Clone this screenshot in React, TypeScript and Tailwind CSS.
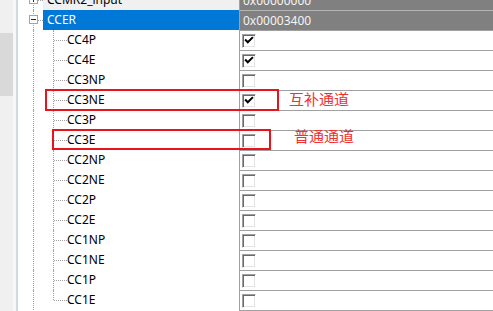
import React from "react";

type Row = {
  name: string;
  root?: boolean;
  value?: string;
  expand?: "+" | "-";
  selected?: boolean;
  hover?: boolean;
  checked?: boolean;
  last?: boolean;
};

const rows: Row[] = [
  { name: "CCMR2_input", root: true, value: "0x00000000", expand: "+", hover: true },
  { name: "CCER", root: true, value: "0x00003400", expand: "-", selected: true },
  { name: "CC4P", checked: true },
  { name: "CC4E", checked: true },
  { name: "CC3NP" },
  { name: "CC3NE", checked: true },
  { name: "CC3P" },
  { name: "CC3E" },
  { name: "CC2NP" },
  { name: "CC2NE" },
  { name: "CC2P" },
  { name: "CC2E" },
  { name: "CC1NP" },
  { name: "CC1NE" },
  { name: "CC1P" },
  { name: "CC1E", last: true },
];

function ExpandBox({ kind }: { kind: "+" | "-" }) {
  return (
    <span className="absolute left-[11px] top-[5px] w-[9px] h-[9px] border border-[#9aa4b2] bg-white flex items-center justify-center">
      <svg width="7" height="7" viewBox="0 0 7 7" shapeRendering="crispEdges">
        <rect x="1" y="3" width="5" height="1" fill="#2b2b2b" />
        {kind === "+" && <rect x="3" y="1" width="1" height="5" fill="#2b2b2b" />}
      </svg>
    </span>
  );
}

function CheckBox({ checked }: { checked?: boolean }) {
  return (
    <div className="ml-[2px] w-[14px] h-[14px] border border-t-[#a0a0a0] border-l-[#a0a0a0] border-r-white border-b-white shadow-[inset_1px_1px_0_#696969,inset_-1px_-1px_0_#e3e3e3] bg-white flex items-center justify-center">
      {checked && (
        <svg width="10" height="10" viewBox="0 0 10 10" className="mt-[1px]">
          <path d="M1.8 4.2 L3.8 6.3 L8.2 1.8" fill="none" stroke="#000" strokeWidth="2" strokeLinecap="square" />
        </svg>
      )}
    </div>
  );
}

function TreeRow({ r }: { r: Row }) {
  const header = r.root;
  return (
    <div className={`flex ${r.last ? "h-[21px]" : "h-[20px]"}`}>
      <div className="relative w-[221px] h-[20px] shrink-0 flex">
        {/* root-level vertical dotted line */}
        <span className="absolute left-[15px] top-0 h-[20px] border-l border-dotted border-[#a0a0a0]" />
        {header ? (
          <>
            <span className="absolute left-[20px] top-[10px] w-[5px] border-t border-dotted border-[#a0a0a0]" />
            <ExpandBox kind={r.expand!} />
            <div
              className={`ml-[25px] flex-1 flex items-center pl-[4px] text-[12px] ${
                r.selected ? "bg-[#0078d7] text-white" : "bg-[#f0f0f0] text-black"
              }`}
            >
              {r.name}
            </div>
          </>
        ) : (
          <>
            <span
              className={`absolute left-[35px] top-0 border-l border-dotted border-[#a0a0a0] ${
                r.last ? "h-[10px]" : "h-[20px]"
              }`}
            />
            <span className="absolute left-[36px] top-[10px] w-[13px] border-t border-dotted border-[#a0a0a0]" />
            <div className="ml-[49px] flex items-center text-[12px] text-black">{r.name}</div>
          </>
        )}
      </div>
      <div
        className={`flex-1 flex items-center border-l border-l-[#a0a0a0] border-t ${
          r.last ? "border-b border-b-[#a0a0a0]" : ""
        } ${header ? "bg-[#808080] border-t-[#b4b4b4] text-[#f4f4f4] text-[12px] pl-[3px]" : "bg-white border-t-[#a0a0a0]"}`}
      >
        {header ? r.value : <CheckBox checked={r.checked} />}
      </div>
    </div>
  );
}

export default function App() {
  return (
    <div className="relative w-[493px] h-[311px] overflow-hidden bg-white flex font-['Noto_Sans','Open_Sans',sans-serif] leading-none">
      <div className="w-[13px] shrink-0 flex flex-col bg-[#f0f0f0]">
        <div className="h-[33px]" />
        <div className="h-[63px] bg-[#d9d9d9]" />
      </div>
      <div className="w-[3px] shrink-0 bg-[#f7f7f7]" />
      <div className="w-[2px] shrink-0 bg-[#d3d9e3]" />
      <div className="flex-1 flex flex-col -mt-[10px]">
        {rows.map((r) => (
          <TreeRow key={r.name} r={r} />
        ))}
      </div>

      {/* annotations */}
      <div className="absolute left-[45px] top-[89px] w-[234px] h-[22px] border-2 border-[#e8141c]" />
      <div className="absolute left-[52px] top-[129px] w-[219px] h-[21px] border-2 border-[#e8141c]" />
      <div className="absolute left-[289px] top-[91px] text-[15px] leading-[15px] text-[#f23030] font-['Noto_Sans_CJK_SC',sans-serif]">
        互补通道
      </div>
      <div className="absolute left-[294px] top-[128px] text-[15px] leading-[15px] text-[#f23030] font-['Noto_Sans_CJK_SC',sans-serif]">
        普通通道
      </div>
    </div>
  );
}
